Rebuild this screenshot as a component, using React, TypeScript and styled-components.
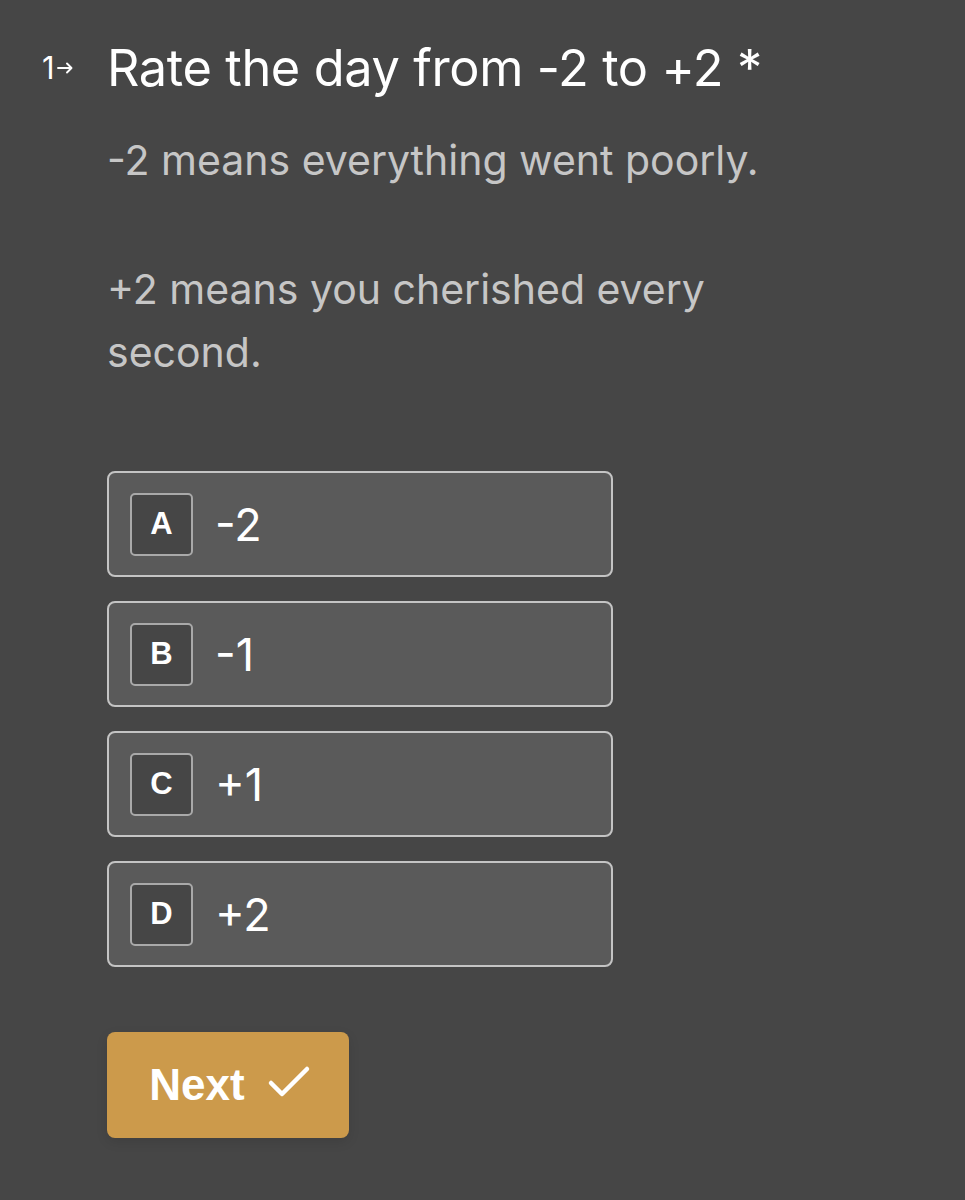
import React, { useState } from 'react';
import styled, { createGlobalStyle } from 'styled-components';

type Choice = { key: string; label: string };

const choices: Choice[] = [
  { key: 'A', label: '-2' },
  { key: 'B', label: '-1' },
  { key: 'C', label: '+1' },
  { key: 'D', label: '+2' },
];

const App: React.FC = () => {
  // selected answer, nothing picked at first
  const [picked, setPicked] = useState<string | null>(null);

  return (
    <StyledPage>
      <GlobalStyle />
      <StyledQuestion>
        <StyledCounter>
          1
          <svg width="20" height="16" viewBox="0 0 20 16" fill="none">
            <path d="M3 8h13M12 3.5l4.5 4.5-4.5 4.5" stroke="#fff" strokeWidth="1.9" strokeLinecap="round" strokeLinejoin="round" />
          </svg>
        </StyledCounter>
        <StyledBody>
          <StyledTitle>Rate the day from -2 to +2 *</StyledTitle>
          <StyledDescription>
            <p>-2 means everything went poorly.</p>
            <p>+2 means you cherished every second.</p>
          </StyledDescription>
          <StyledChoices>
            {choices.map((c) => (
              <StyledChoice key={c.key} $active={picked === c.key} onClick={() => setPicked(c.key)}>
                <StyledKey>{c.key}</StyledKey>
                <StyledLabel>{c.label}</StyledLabel>
              </StyledChoice>
            ))}
          </StyledChoices>
          <StyledNext type="button">
            Next
            <svg width="44" height="34" viewBox="0 0 44 34" fill="none">
              <path d="M4 18l11 11L40 4" stroke="#fff" strokeWidth="4.5" strokeLinecap="round" strokeLinejoin="round" />
            </svg>
          </StyledNext>
        </StyledBody>
      </StyledQuestion>
    </StyledPage>
  );
};

const GlobalStyle = createGlobalStyle`
  html, body {
    margin: 0;
    padding: 0;
    background: #464646;
  }
  body {
    font-family: Inter, "Liberation Sans", sans-serif;
  }
`;

const StyledPage = styled.main`
  min-height: 1200px;
  background: #464646;
  padding-top: 36px;
  box-sizing: border-box;
`;

const StyledQuestion = styled.section`
  display: flex;
  align-items: flex-start;
`;

const StyledCounter = styled.div`
  flex: 0 0 107px;
  box-sizing: border-box;
  padding: 14px 0 0 42px;
  display: flex;
  align-items: center;
  gap: 0;
  color: #fff;
  font-size: 31px;
  line-height: 36px;
  white-space: nowrap;
`;

const StyledBody = styled.div`
  flex: 1;
`;

const StyledTitle = styled.h1`
  margin: 0;
  font-size: 50.5px;
  font-weight: 400;
  line-height: 64px;
  color: #fff;
  letter-spacing: -0.4px;
`;

const StyledDescription = styled.div`
  margin-top: 29px;
  width: 665px;
  color: #c6c6c6;
  font-size: 41px;
  line-height: 63px;
  p {
    margin: 0 0 66px 0;
  }
  p:last-child {
    margin-bottom: 0;
  }
`;

const StyledChoices = styled.div`
  margin-top: 87px;
  width: 506px;
  display: flex;
  flex-direction: column;
  gap: 24px;
`;

const StyledChoice = styled.div<{ $active: boolean }>`
  height: 106px;
  box-sizing: border-box;
  border: 2px solid ${(p) => (p.$active ? '#e6e6e6' : '#c4c4c4')};
  border-radius: 8px;
  background: ${(p) => (p.$active ? '#666' : '#5a5a5a')};
  display: flex;
  align-items: center;
  padding-left: 21px;
  gap: 22px;
  cursor: pointer;
`;

const StyledKey = styled.span`
  width: 63px;
  height: 63px;
  box-sizing: border-box;
  border: 2px solid #a9a9a9;
  border-radius: 5px;
  background: #464646;
  color: #fff;
  font-family: "Liberation Sans", Arial, sans-serif;
  font-weight: 700;
  font-size: 31px;
  display: flex;
  align-items: center;
  justify-content: center;
`;

const StyledLabel = styled.span`
  color: #fff;
  font-size: 45px;
  line-height: 1;
`;

const StyledNext = styled.button`
  margin-top: 65px;
  width: 242px;
  height: 106px;
  border: none;
  border-radius: 8px;
  background: #cc9a4b;
  color: #fff;
  font-family: "Liberation Sans", Arial, sans-serif;
  font-weight: 700;
  font-size: 44px;
  display: flex;
  align-items: center;
  justify-content: center;
  gap: 22px;
  padding: 0 0 0 4px;
  box-shadow: 0 4px 12px rgba(0, 0, 0, 0.1);
  cursor: pointer;
  svg {
    margin-top: -6px;
  }
`;

export default App;
